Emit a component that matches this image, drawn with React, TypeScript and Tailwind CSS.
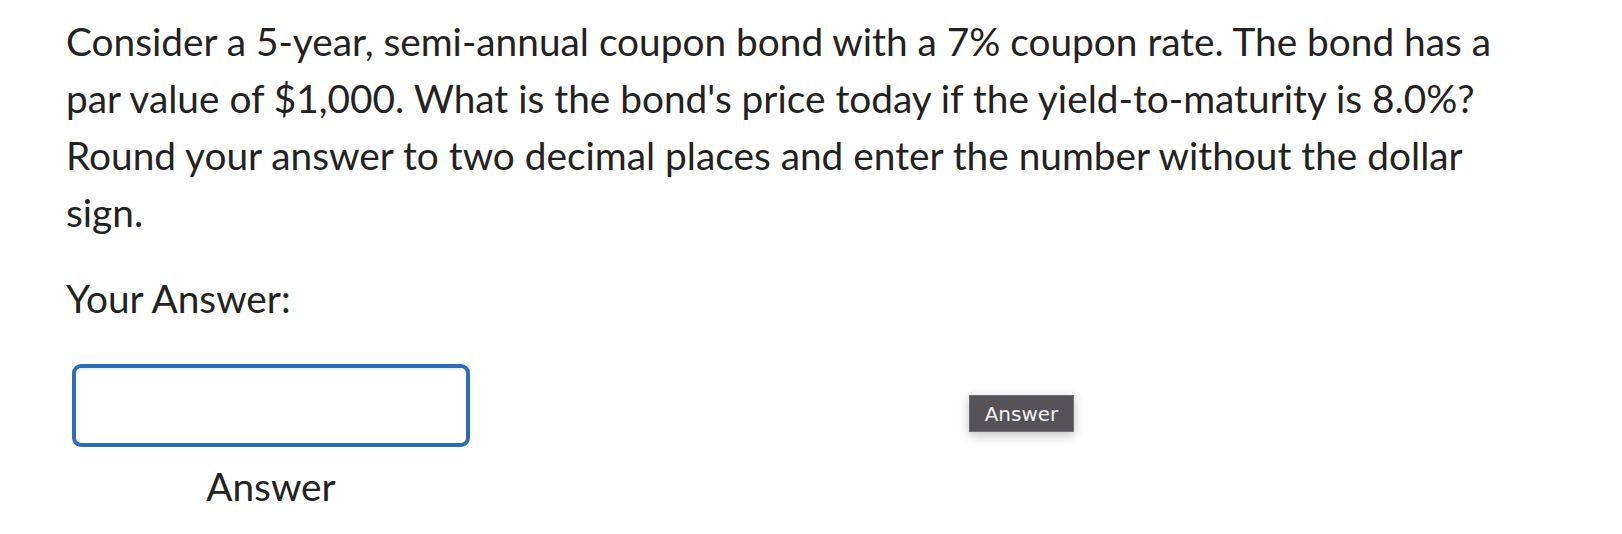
import React from "react";

export default function App() {
  return (
    <div className="relative w-[1622px] h-[534px] bg-white text-[#222] overflow-hidden" style={{ fontFamily: "Lato, 'Open Sans', sans-serif" }}>
      <div className="pl-[66px] pt-[13px]">
        <p className="text-[38.8px] leading-[57px] max-w-[1470px]">
          Consider a 5-year, semi-annual coupon bond with a 7% coupon rate. The bond has a par value of $1,000. What is the bond's price today if the yield-to-maturity is 8.0%? Round your answer to two decimal places and enter the number without the dollar sign.
        </p>
        <p className="mt-[29px] text-[38.8px] leading-[57px]">Your Answer:</p>
        <div className="mt-[37px] ml-[6px] w-[398px] flex flex-col items-center">
          <input
            type="text"
            aria-label="Answer"
            className="w-[398px] h-[83px] rounded-[9px] border-[4px] border-[#2b6dbb] bg-white shadow-[inset_0_2px_2px_rgba(0,0,0,0.07)] outline-none"
          />
          <span className="mt-[11px] text-[38.8px] leading-[57px]">Answer</span>
        </div>
      </div>
      <div
        className="absolute left-[969px] top-[395px] w-[105px] h-[37px] flex items-center justify-center bg-[#555358] border border-[#6f6e72] text-[#f3f3f3] text-[20px] shadow-[0_3px_10px_rgba(0,0,0,0.25)]"
        style={{ fontFamily: "'DejaVu Sans', sans-serif" }}
      >
        Answer
      </div>
    </div>
  );
}
